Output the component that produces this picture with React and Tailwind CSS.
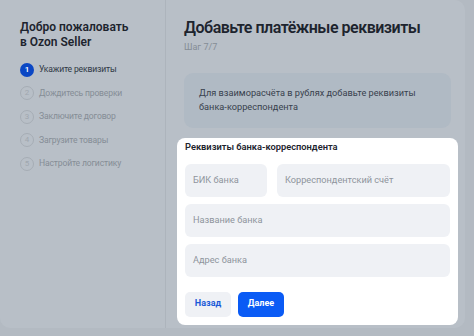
import React from "react";

const steps = [
  "Укажите реквизиты",
  "Дождитесь проверки",
  "Заключите договор",
  "Загрузите товары",
  "Настройте логистику",
];

function Step({ n, label, active }) {
  return (
    <div className="flex items-center gap-[5px] h-[23.5px]">
      {active ? (
        <div className="w-[14px] h-[14px] rounded-full bg-[#0b47c4] text-white text-[8px] font-semibold flex items-center justify-center">{n}</div>
      ) : (
        <div className="w-[14px] h-[14px] rounded-full border border-[#a6adb5] text-[#a0a7af] text-[8px] flex items-center justify-center">{n}</div>
      )}
      <span className={active ? "text-[8.6px] tracking-[-0.02em] text-[#2f3844]" : "text-[8.6px] tracking-[-0.02em] text-[#858d96]"}>{label}</span>
    </div>
  );
}

function Field({ placeholder, className = "" }) {
  return (
    <div className={"h-[33px] rounded-[6px] bg-[#eff1f5] flex items-center px-[8px] text-[9.2px] text-[#8e949c] " + className}>
      {placeholder}
    </div>
  );
}

export default function App() {
  return (
    <div className="w-[474px] h-[336px] bg-[#b3bac2] flex overflow-hidden" style={{ fontFamily: "Roboto, 'Noto Sans', sans-serif" }}>
      <div className="w-[166px] h-[328px] bg-[#b8bfc7] border-r border-[#adb4bc] rounded-bl-[10px] pl-[20px] pt-[20px]">
        <h1 className="text-[12px] leading-[15px] font-semibold text-[#1d242e]">
          Добро пожаловать<br />в Ozon Seller
        </h1>
        <div className="mt-[8px]">
          {steps.map((s, i) => (
            <Step key={s} n={i + 1} label={s} active={i === 0} />
          ))}
        </div>
      </div>
      <div className="w-[299px] h-[328px] bg-[#b8bfc7] rounded-r-[10px] pl-[18px] pr-[14px] pt-[17px]">
        <h2 className="text-[16px] leading-[22px] font-semibold tracking-[-0.03em] text-[#1d242e] whitespace-nowrap">Добавьте платёжные реквизиты</h2>
        <div className="text-[9px] text-[#858d96] mt-[2px]">Шаг 7/7</div>
        <div className="mt-[18px] h-[55px] rounded-[9px] bg-[#b0bac4] px-[15px] flex items-center">
          <p className="text-[9.2px] leading-[14px] text-[#38414d]">
            Для взаиморасчёта в рублях добавьте реквизиты<br />банка-корреспондента
          </p>
        </div>
        <div className="mt-[10px] -mx-[7px] bg-white rounded-[8px] px-[8px] pt-[2px] pb-[8px]">
          <div className="text-[9.3px] font-semibold text-[#1d242e] h-[14px] leading-[14px]">Реквизиты банка-корреспондента</div>
          <div className="mt-[10px] flex flex-col gap-[7px]">
            <div className="flex gap-[10px]">
              <Field placeholder="БИК банка" className="w-[82px]" />
              <Field placeholder="Корреспондентский счёт" className="flex-1" />
            </div>
            <Field placeholder="Название банка" />
            <Field placeholder="Адрес банка" />
          </div>
          <div className="mt-[15px] flex gap-[7px]">
            <button className="w-[46px] h-[25px] rounded-[5px] bg-[#eff1f5] text-[9px] font-bold text-[#1a5ad8]">Назад</button>
            <button className="w-[46px] h-[25px] rounded-[5px] bg-[#0a5bf5] text-[9px] font-bold text-white">Далее</button>
          </div>
        </div>
      </div>
    </div>
  );
}
